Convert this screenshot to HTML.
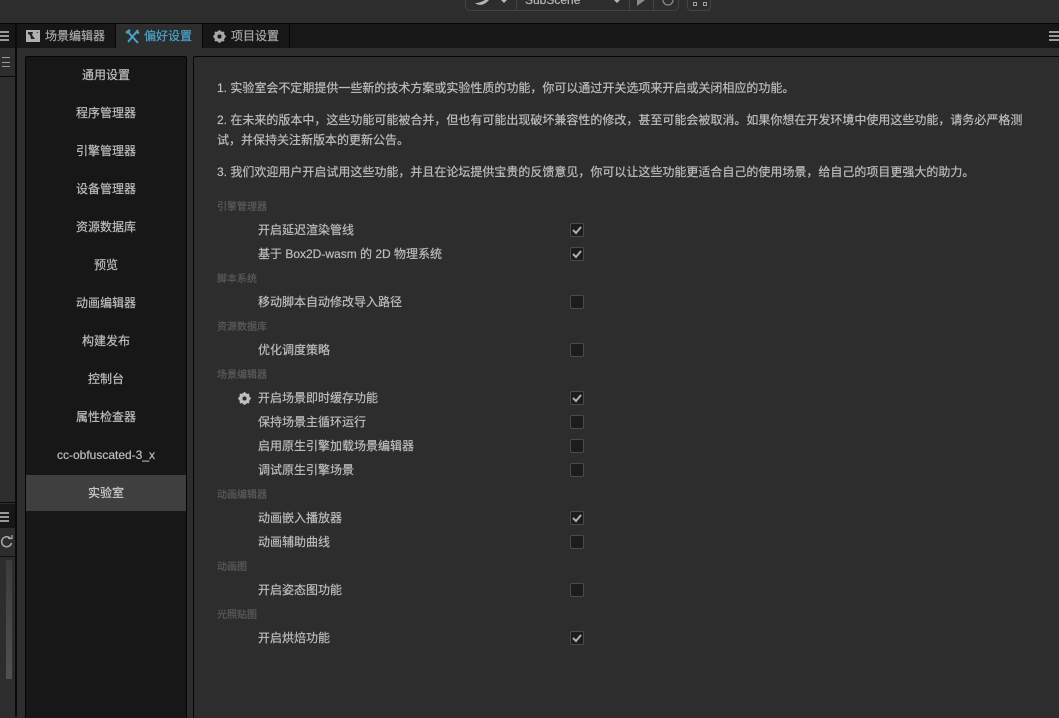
<!DOCTYPE html>
<html><head><meta charset="utf-8"><style>
html,body{margin:0;padding:0;background:#2d2d2d}
body{width:1059px;height:717px;position:relative;overflow:hidden;font-family:"Liberation Sans","Microsoft YaHei","Noto Sans CJK SC",sans-serif;font-size:12px;color:#bdbdbd;-webkit-text-stroke:.2px}
.a{position:absolute}
.t{position:absolute;white-space:nowrap;line-height:16px}
.m{position:absolute;left:26px;width:160px;height:36px;line-height:38px;text-align:center;color:#bdbdbd}
.g{position:absolute;left:217px;font-size:10px;line-height:12px;color:#5c5c5c;white-space:nowrap}
.l{position:absolute;left:258px;line-height:16px;color:#bdbdbd;white-space:nowrap}
.c{position:absolute;left:570px;width:12px;height:12px;background:#1c1c1c;border:1px solid #4a4a4a;border-radius:2px}
.c svg{position:absolute;left:0;top:0}
.p{position:absolute;left:217px;width:830px;line-height:20px;color:#bdbdbd}
.b{position:absolute;background:#9a9a9a;height:1px}
</style></head><body>
<div class="a" style="left:0;top:0;width:1059px;height:23px;background:#2d2d2d"></div>
<!-- toolbar -->
<div class="a" style="left:465px;top:-6px;width:212px;height:15px;border:1px solid #444;border-radius:5px"></div>
<div class="a" style="left:516px;top:0;width:1px;height:10px;background:#444"></div>
<div class="a" style="left:629px;top:0;width:1px;height:10px;background:#444"></div>
<div class="a" style="left:653px;top:0;width:1px;height:10px;background:#444"></div>
<div class="a" style="left:687px;top:-6px;width:22px;height:15px;border:1px solid #444;border-radius:4px"></div>
<svg class="a" style="left:470px;top:0" width="40" height="8"><path d="M5 3 Q12 8 19 0 L15 0 Q10 3 5 3Z" fill="#b5b5b5"/><path d="M31 0 L37 0 L34 3Z" fill="#b5b5b5"/></svg>
<div class="t" style="left:525px;top:-8px;color:#b5b5b5">SubScene</div>
<svg class="a" style="left:610px;top:0" width="100" height="10"><path d="M4 0 L10 0 L7 3Z" fill="#b5b5b5"/><path d="M27 0 L35 0 L27 6Z" fill="#8a8a8a"/><path d="M53 0 A4.5 4.5 0 0 0 63 0" stroke="#8a8a8a" stroke-width="1.3" fill="none"/><rect x="83.5" y="2.5" width="3" height="3" fill="none" stroke="#a0a0a0"/><rect x="93.5" y="2.5" width="3" height="3" fill="none" stroke="#a0a0a0"/></svg>
<!-- tab bar -->
<div class="a" style="left:0;top:23px;width:1059px;height:1px;background:#050505"></div>
<div class="a" style="left:0;top:24px;width:1059px;height:24px;background:#171717"></div>
<div class="a" style="left:15px;top:24px;width:2px;height:693px;background:#0a0a0a"></div>
<div class="a" style="left:115px;top:24px;width:1px;height:24px;background:#050505"></div>
<div class="a" style="left:116px;top:24px;width:86px;height:24px;background:#2d2d2d"></div>
<div class="a" style="left:202px;top:24px;width:1px;height:24px;background:#050505"></div>
<div class="a" style="left:289px;top:24px;width:1px;height:24px;background:#050505"></div>
<div class="a" style="left:17px;top:48px;width:1042px;height:8px;background:#2d2d2d"></div>
<svg class="a" style="left:26px;top:30px" width="14" height="12"><rect width="14" height="12" fill="#b0b0b0"/><path d="M2 2 L7 2 L6 5 L9 9 L5 9 L4 5 L2 4Z M10 3 L12 2 L12 3Z" fill="#222"/></svg>
<div class="t" style="left:45px;top:28px;color:#a8a8a8">场景编辑器</div>
<svg class="a" style="left:125px;top:29px" width="15" height="15" fill="none" stroke="#4aa3c8" stroke-width="2"><path d="M3 3 L13 14"/><path d="M13 1 L3 13"/><path d="M1 4 L5 1" stroke-width="2.5"/><path d="M11 3 L14 4" stroke-width="2.5"/></svg>
<div class="t" style="left:144px;top:28px;color:#4aa3c8">偏好设置</div>
<svg class="a" style="left:213px;top:30px" width="13" height="13"><circle cx="6.5" cy="6.5" r="4" fill="none" stroke="#a8a8a8" stroke-width="3"/><path d="M6.5 0V13M0 6.5H13M2 2L11 11M11 2L2 11" stroke="#a8a8a8" stroke-width="1.6"/><circle cx="6.5" cy="6.5" r="2" fill="#171717"/></svg>
<div class="t" style="left:231px;top:28px;color:#a8a8a8">项目设置</div>
<div class="b" style="left:1049px;top:31px;width:10px;height:2px"></div>
<div class="b" style="left:1049px;top:35px;width:10px;height:2px"></div>
<div class="b" style="left:1049px;top:39px;width:10px;height:2px"></div>
<!-- left strip -->
<div class="b" style="left:0;top:31px;width:9px;height:2px"></div>
<div class="b" style="left:0;top:35px;width:9px;height:2px"></div>
<div class="b" style="left:0;top:39px;width:9px;height:2px"></div>
<div class="a" style="left:0;top:48px;width:15px;height:28px;background:#2d2d2d;border-bottom:1px solid #0a0a0a"></div>
<div class="b" style="left:2px;top:57px;width:8px"></div>
<div class="b" style="left:2px;top:62px;width:8px"></div>
<div class="b" style="left:2px;top:66px;width:8px"></div>
<div class="a" style="left:0;top:502px;width:15px;height:1px;background:#0a0a0a"></div>
<div class="a" style="left:0;top:504px;width:15px;height:24px;background:#171717"></div>
<div class="b" style="left:0;top:512px;width:9px;height:2px"></div>
<div class="b" style="left:0;top:516px;width:9px;height:2px"></div>
<div class="b" style="left:0;top:520px;width:9px;height:2px"></div>
<svg class="a" style="left:0;top:535px" width="14" height="15" fill="none" stroke="#a8a8a8" stroke-width="1.5"><path d="M10.5 3.5 A5 5 0 1 0 11.5 8"/><path d="M8 3.5H12V0" stroke-width="1.2"/></svg>
<div class="a" style="left:0;top:556px;width:15px;height:1px;background:#111"></div>
<div class="a" style="left:6px;top:560px;width:6px;height:119px;background:linear-gradient(#3c3c3c,#505050)"></div>
<!-- sidebar -->
<div class="a" style="left:25px;top:56px;width:160px;height:661px;background:#171717;border:1px solid #050505;border-bottom:0;border-radius:2px 2px 0 0;box-sizing:content-box"></div>
<div class="m" style="top:56px">通用设置</div>
<div class="m" style="top:94px">程序管理器</div>
<div class="m" style="top:132px">引擎管理器</div>
<div class="m" style="top:170px">设备管理器</div>
<div class="m" style="top:208px">资源数据库</div>
<div class="m" style="top:246px">预览</div>
<div class="m" style="top:284px">动画编辑器</div>
<div class="m" style="top:322px">构建发布</div>
<div class="m" style="top:360px">控制台</div>
<div class="m" style="top:398px">属性检查器</div>
<div class="m" style="top:436px">cc-obfuscated-3_x</div>
<div class="m" style="top:475px;line-height:36px;background:#3f3f3f;color:#cfcfcf">实验室</div>
<!-- panel -->
<div class="a" style="left:193px;top:56px;width:865px;height:661px;background:#2d2d2d;border-left:1px solid #050505;border-top:1px solid #050505;border-right:1px solid #050505;border-radius:2px 0 0 0"></div>
<div class="p" style="top:78px">1. 实验室会不定期提供一些新的技术方案或实验性质的功能，你可以通过开关选项来开启或关闭相应的功能。</div>
<div class="p" style="top:110px;width:812px">2. 在未来的版本中，这些功能可能被合并，但也有可能出现破坏兼容性的修改，甚至可能会被取消。如果你想在开发环境中使用这些功能，请务必严格测试，并保持关注新版本的更新公告。</div>
<div class="p" style="top:162px">3. 我们欢迎用户开启试用这些功能，并且在论坛提供宝贵的反馈意见，你可以让这些功能更适合自己的使用场景，给自己的项目更强大的助力。</div>

<div class="g" style="top:202px">引擎管理器</div>
<div class="l" style="top:222px">开启延迟渲染管线</div>
<div class="c" style="top:223px"><svg width="12" height="12"><path d="M2 6 L5 9 L10 3" stroke="#b0b0b0" stroke-width="2" fill="none"/></svg></div>
<div class="l" style="top:246px">基于 Box2D-wasm 的 2D 物理系统</div>
<div class="c" style="top:247px"><svg width="12" height="12"><path d="M2 6 L5 9 L10 3" stroke="#b0b0b0" stroke-width="2" fill="none"/></svg></div>
<div class="g" style="top:274px">脚本系统</div>
<div class="l" style="top:294px">移动脚本自动修改导入路径</div>
<div class="c" style="top:295px"></div>
<div class="g" style="top:322px">资源数据库</div>
<div class="l" style="top:342px">优化调度策略</div>
<div class="c" style="top:343px"></div>
<div class="g" style="top:370px">场景编辑器</div>
<svg class="a" style="left:238px;top:392px" width="13" height="13"><circle cx="6.5" cy="6.5" r="4" fill="none" stroke="#c0c0c0" stroke-width="3"/><path d="M6.5 0V13M0 6.5H13M2 2L11 11M11 2L2 11" stroke="#c0c0c0" stroke-width="1.6"/><circle cx="6.5" cy="6.5" r="2" fill="#2d2d2d"/></svg>
<div class="l" style="top:390px">开启场景即时缓存功能</div>
<div class="c" style="top:391px"><svg width="12" height="12"><path d="M2 6 L5 9 L10 3" stroke="#b0b0b0" stroke-width="2" fill="none"/></svg></div>
<div class="l" style="top:414px">保持场景主循环运行</div>
<div class="c" style="top:415px"></div>
<div class="l" style="top:438px">启用原生引擎加载场景编辑器</div>
<div class="c" style="top:439px"></div>
<div class="l" style="top:462px">调试原生引擎场景</div>
<div class="c" style="top:463px"></div>
<div class="g" style="top:490px">动画编辑器</div>
<div class="l" style="top:510px">动画嵌入播放器</div>
<div class="c" style="top:511px"><svg width="12" height="12"><path d="M2 6 L5 9 L10 3" stroke="#b0b0b0" stroke-width="2" fill="none"/></svg></div>
<div class="l" style="top:534px">动画辅助曲线</div>
<div class="c" style="top:535px"></div>
<div class="g" style="top:562px">动画图</div>
<div class="l" style="top:582px">开启姿态图功能</div>
<div class="c" style="top:583px"></div>
<div class="g" style="top:610px">光照贴图</div>
<div class="l" style="top:630px">开启烘焙功能</div>
<div class="c" style="top:631px"><svg width="12" height="12"><path d="M2 6 L5 9 L10 3" stroke="#b0b0b0" stroke-width="2" fill="none"/></svg></div>
</body></html>
